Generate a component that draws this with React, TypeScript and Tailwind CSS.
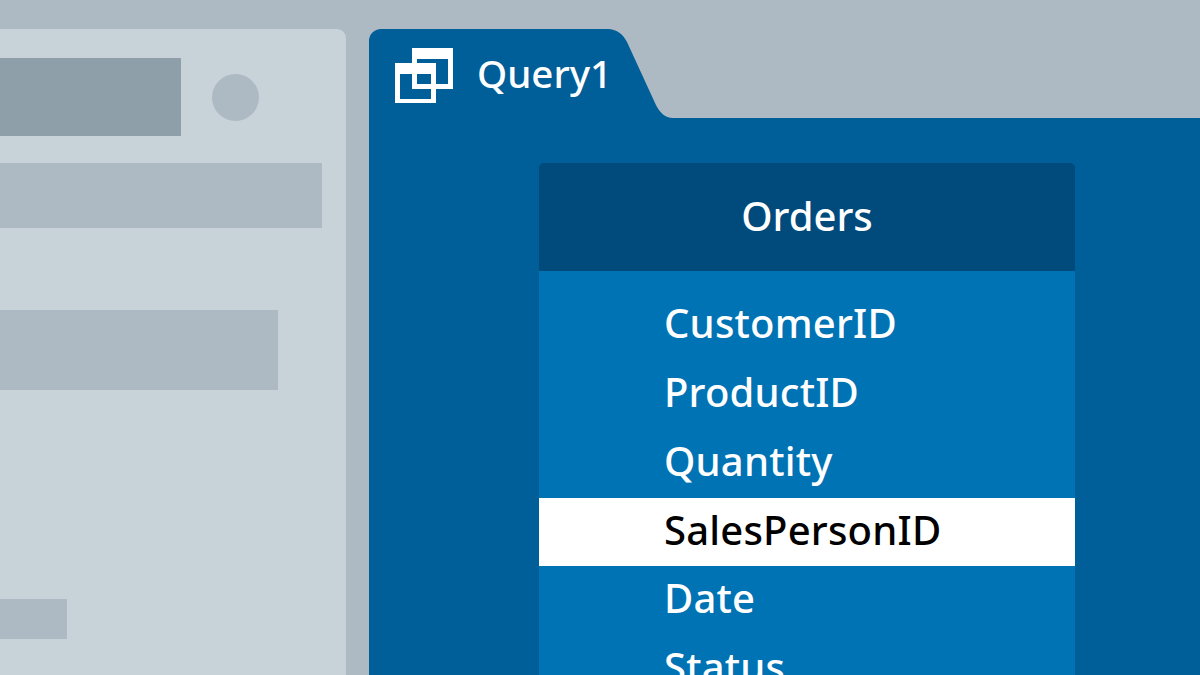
const font = "font-['Noto_Sans',sans-serif]";

const fields = ['CustomerID', 'ProductID', 'Quantity', 'SalesPersonID', 'Date', 'Status'];

const QueryIcon = () => (
  <svg width="58" height="55" viewBox="0 0 58 55" fill="#fff" fillRule="evenodd" className="shrink-0">
    <path d="M17 0H58V41H17Z M22 11V36H53V11Z" />
    <path d="M0 15H41V55H0Z M5 26V51H36V26Z" />
  </svg>
);

export default function App() {
  return (
    <div className={`${font} flex h-[675px] w-[1200px] gap-[23px] overflow-hidden bg-[#adb9c3] pt-[29px]`}>
      {/* left panel, mostly cropped off */}
      <div className="h-[700px] w-[346px] shrink-0 rounded-tr-[9px] bg-[#c8d2d9] pt-[29px]">
        <div className="flex items-center gap-[31px]">
          <div className="h-[78px] w-[181px] bg-[#8f9fa9]" />
          <div className="h-[47px] w-[47px] rounded-full bg-[#adb9c3]" />
        </div>
        <div className="mt-[27px] h-[65px] w-[322px] bg-[#adb9c3]" />
        <div className="mt-[82px] h-[80px] w-[278px] bg-[#adb9c3]" />
        <div className="mt-[209px] h-[40px] w-[67px] bg-[#adb9c3]" />
      </div>

      <div className="flex min-w-0 flex-1 flex-col">
        <div className="flex h-[89px] shrink-0">
          <div className="flex w-[239px] items-center gap-[24px] rounded-tl-[12px] bg-[#005e99] pl-[26px] pt-[4px]">
            <QueryIcon />
            <span className="mb-[4px] whitespace-nowrap text-[38.5px] font-medium leading-none text-white">Query1</span>
          </div>
          {/* slanted end of the tab */}
          <svg width="65" height="89" viewBox="0 0 65 89" className="shrink-0">
            <path d="M0 0 C8 0 15 5 19 13 L47 74 C51 83 57 89 65 89 H0 Z" fill="#005e99" />
          </svg>
        </div>
        <div className="flex-1 bg-[#005e99] pl-[170px] pt-[45px]">
          <div className="w-[536px]">
            <div className="flex h-[108px] items-center justify-center rounded-t-[5px] bg-[#004a7c] pb-[2px] text-[40px] font-medium text-white">
              Orders
            </div>
            <div className="h-[500px] bg-[#0073b5] pt-[20px]">
              {fields.map((f) => (
                <div
                  key={f}
                  className={`flex items-center pb-[5px] pl-[125px] text-[40px] font-medium tracking-[0.2px] ${
                    f === 'SalesPersonID' ? 'h-[68px] bg-white text-black' : 'h-[69px] text-white'
                  }`}
                >
                  {f}
                </div>
              ))}
            </div>
          </div>
        </div>
      </div>
    </div>
  );
}
